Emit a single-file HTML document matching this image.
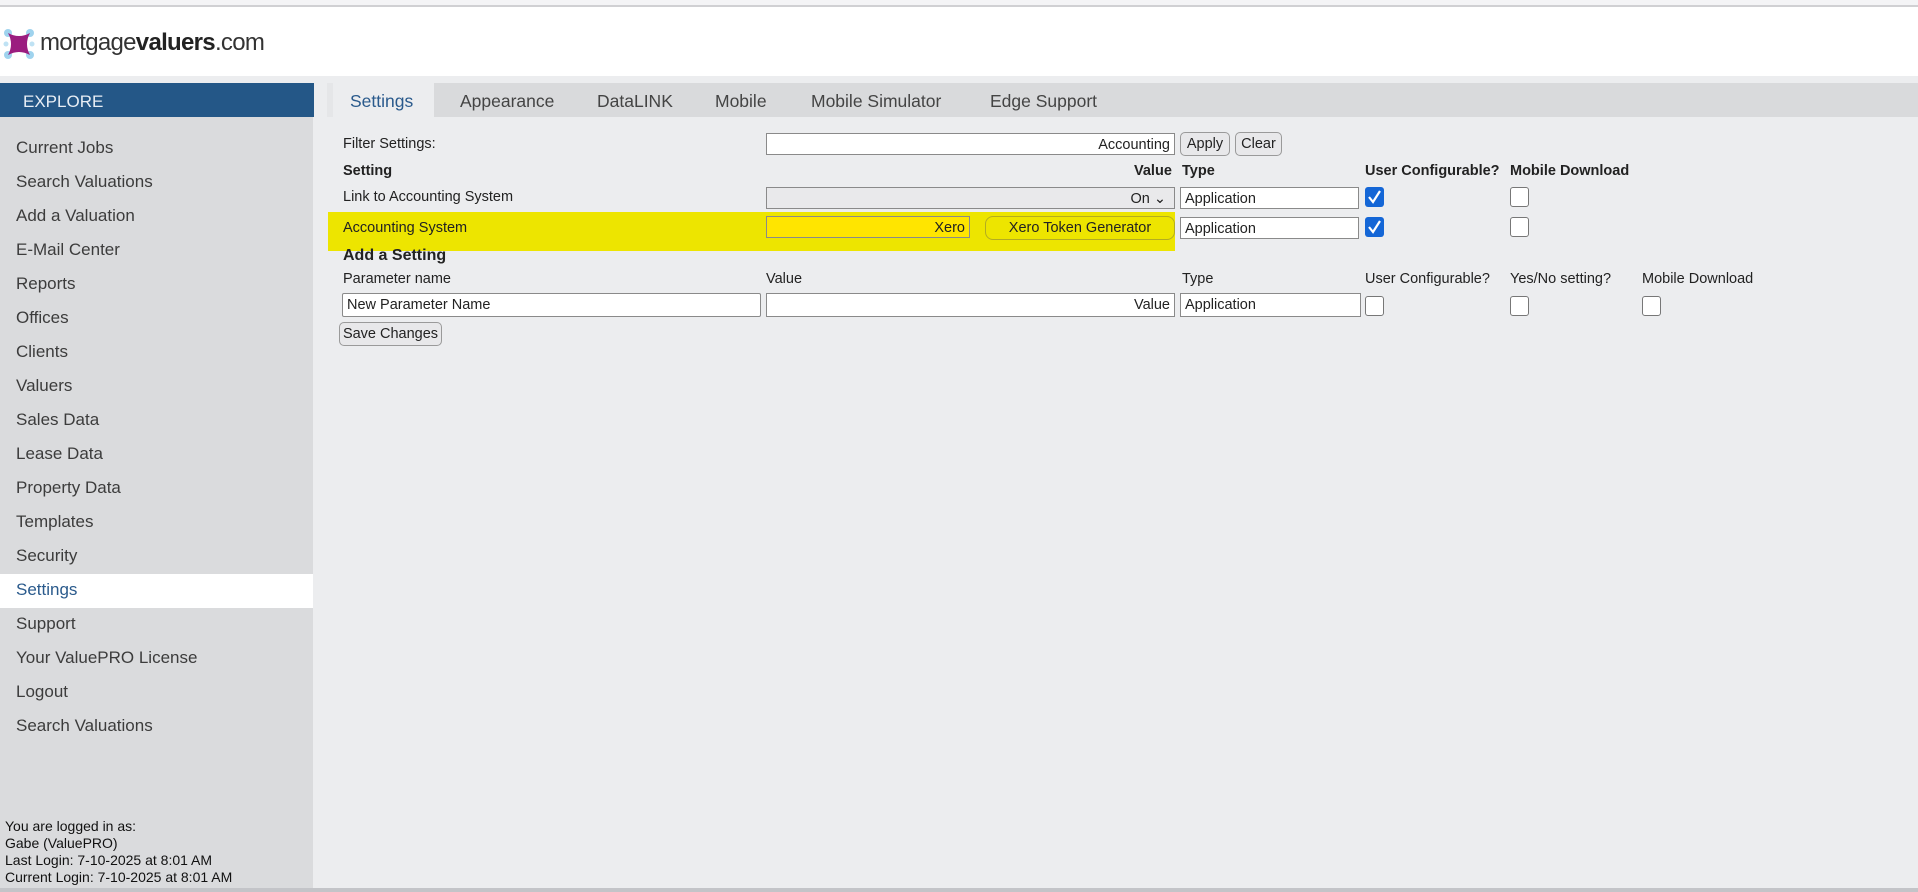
<!DOCTYPE html>
<html><head><meta charset="utf-8"><style>
*{margin:0;padding:0;box-sizing:border-box}
body{width:1918px;height:892px;position:relative;background:#fff;font-family:"Liberation Sans",Arial,sans-serif;overflow:hidden;color:#222}
.a{position:absolute;white-space:nowrap}
.topbar{left:0;top:0;width:1918px;height:7px;background:#f4f4f6;border-bottom:2px solid #d0d0d3}
.grey{left:0;top:76px;width:1918px;height:813px;background:#ecedef}
.side{left:0;top:117px;width:313px;height:772px;background:#dadbdd}
.explore{left:0;top:83px;width:314px;height:34px;background:#245787;color:#e8eef5;font-size:17px;padding:9px 0 0 23px}
.nav{left:16px;font-size:17px;color:#3c3c3c;line-height:20px}
.tabs{left:327px;top:83px;width:1591px;height:34px;background:#d9dadc;border-left:6px solid #e5e6e8}
.tab{top:91px;font-size:17.5px;color:#444}
.t{font-size:14.5px;color:#222}
.b{font-weight:bold}
.inp{background:#fff;border:1px solid #8a8a8a;height:22px;font-size:14.5px;padding:3px 4px 0;line-height:17px}
.btn{background:#e8e8ea;border:1px solid #9a9a9a;border-radius:5px;font-size:14.5px;text-align:center;line-height:22px}
.cb{width:19px;height:20px;border:1px solid #777;border-radius:3px;background:#fff}
.cbc{width:19px;height:20px;border-radius:3px;background:#1466d6}
.foot{left:5px;font-size:14px;color:#111}
</style></head><body>
<div class="a topbar"></div>
<svg class="a" style="left:3px;top:28px" width="32" height="32" viewBox="0 0 32 32">
<circle cx="5" cy="5" r="4" fill="#9fd3ee"/><circle cx="27" cy="5" r="4" fill="#9fd3ee"/><circle cx="5" cy="27" r="4" fill="#9fd3ee"/><circle cx="27" cy="27" r="4" fill="#9fd3ee"/>
<circle cx="3" cy="16" r="2.5" fill="#bfe2f4"/><circle cx="29" cy="16" r="2.5" fill="#bfe2f4"/>
<path d="M5 5 Q16 11 27 5 Q21 16 27 27 Q16 21 5 27 Q11 16 5 5Z" fill="#9b1d7f"/>
</svg>
<div class="a" style="left:40px;top:29px;font-size:24px;color:#333;letter-spacing:-0.7px">mortgage<b style="color:#222">valuers</b>.com</div>
<div class="a grey"></div>
<div class="a side"></div>
<div class="a explore">EXPLORE</div>
<div class="a" style="left:0;top:574px;width:313px;height:34px;background:#fff"></div>
<div class="a nav" style="top:138px">Current Jobs</div>
<div class="a nav" style="top:172px">Search Valuations</div>
<div class="a nav" style="top:206px">Add a Valuation</div>
<div class="a nav" style="top:240px">E-Mail Center</div>
<div class="a nav" style="top:274px">Reports</div>
<div class="a nav" style="top:308px">Offices</div>
<div class="a nav" style="top:342px">Clients</div>
<div class="a nav" style="top:376px">Valuers</div>
<div class="a nav" style="top:410px">Sales Data</div>
<div class="a nav" style="top:444px">Lease Data</div>
<div class="a nav" style="top:478px">Property Data</div>
<div class="a nav" style="top:512px">Templates</div>
<div class="a nav" style="top:546px">Security</div>
<div class="a nav" style="top:580px;color:#2a5a8c">Settings</div>
<div class="a nav" style="top:614px">Support</div>
<div class="a nav" style="top:648px">Your ValuePRO License</div>
<div class="a nav" style="top:682px">Logout</div>
<div class="a nav" style="top:716px">Search Valuations</div>
<div class="a foot" style="top:818px">You are logged in as:</div>
<div class="a foot" style="top:835px">Gabe (ValuePRO)</div>
<div class="a foot" style="top:852px">Last Login: 7-10-2025 at 8:01 AM</div>
<div class="a foot" style="top:869px">Current Login: 7-10-2025 at 8:01 AM</div>
<div class="a" style="left:0;top:888px;width:1918px;height:4px;background:#c3c4c8"></div>
<div class="a tabs"></div>
<div class="a" style="left:333px;top:83px;width:101px;height:34px;background:#ecedef"></div>
<div class="a tab" style="left:350px;color:#2a5a8c">Settings</div>
<div class="a tab" style="left:460px">Appearance</div>
<div class="a tab" style="left:597px">DataLINK</div>
<div class="a tab" style="left:715px">Mobile</div>
<div class="a tab" style="left:811px">Mobile Simulator</div>
<div class="a tab" style="left:990px">Edge Support</div>

<div class="a t" style="left:343px;top:136px">Filter Settings:</div>
<div class="a inp" style="left:766px;top:133px;width:409px;text-align:right">Accounting</div>
<div class="a btn" style="left:1180px;top:132px;width:50px;height:24px">Apply</div>
<div class="a btn" style="left:1235px;top:132px;width:47px;height:24px">Clear</div>

<div class="a t b" style="left:343px;top:163px">Setting</div>
<div class="a t b" style="left:1134px;top:163px">Value</div>
<div class="a t b" style="left:1182px;top:163px">Type</div>
<div class="a t b" style="left:1365px;top:163px">User Configurable?</div>
<div class="a t b" style="left:1510px;top:163px">Mobile Download</div>

<div class="a t" style="left:343px;top:189px">Link to Accounting System</div>
<div class="a inp" style="left:766px;top:187px;width:409px;background:#e9e9eb;text-align:right;padding-right:8px">On &#8964;</div>
<div class="a inp" style="left:1180px;top:187px;width:179px">Application</div>
<div class="a cbc" style="left:1365px;top:187px"></div>
<svg class="a" style="left:1365px;top:187px" width="19" height="20"><path d="M4 10 L8 15 L15 4" stroke="#fff" stroke-width="2.2" fill="none"/></svg>
<div class="a cb" style="left:1510px;top:187px"></div>

<div class="a" style="left:328px;top:212px;width:847px;height:39px;background:#ede500"></div>
<div class="a t" style="left:343px;top:220px">Accounting System</div>
<div class="a inp" style="left:766px;top:216px;width:204px;background:#ffe500;text-align:right">Xero</div>
<div class="a btn" style="left:985px;top:216px;width:190px;height:24px;background:#ede500;border-color:#b3ad20;border-radius:8px">Xero Token Generator</div>
<div class="a inp" style="left:1180px;top:217px;width:179px">Application</div>
<div class="a cbc" style="left:1365px;top:217px"></div>
<svg class="a" style="left:1365px;top:217px" width="19" height="20"><path d="M4 10 L8 15 L15 4" stroke="#fff" stroke-width="2.2" fill="none"/></svg>
<div class="a cb" style="left:1510px;top:217px"></div>

<div class="a b" style="left:343px;top:247px;font-size:16px">Add a Setting</div>
<div class="a t" style="left:343px;top:271px">Parameter name</div>
<div class="a t" style="left:766px;top:271px">Value</div>
<div class="a t" style="left:1182px;top:271px">Type</div>
<div class="a t" style="left:1365px;top:271px">User Configurable?</div>
<div class="a t" style="left:1510px;top:271px">Yes/No setting?</div>
<div class="a t" style="left:1642px;top:271px">Mobile Download</div>

<div class="a inp" style="left:342px;top:293px;width:419px;height:24px;border-radius:2px">New Parameter Name</div>
<div class="a inp" style="left:766px;top:293px;width:409px;height:24px;text-align:right">Value</div>
<div class="a inp" style="left:1180px;top:293px;width:181px;height:24px">Application</div>
<div class="a cb" style="left:1365px;top:296px"></div>
<div class="a cb" style="left:1510px;top:296px"></div>
<div class="a cb" style="left:1642px;top:296px"></div>
<div class="a btn" style="left:339px;top:322px;width:103px;height:24px">Save Changes</div>
</body></html>
